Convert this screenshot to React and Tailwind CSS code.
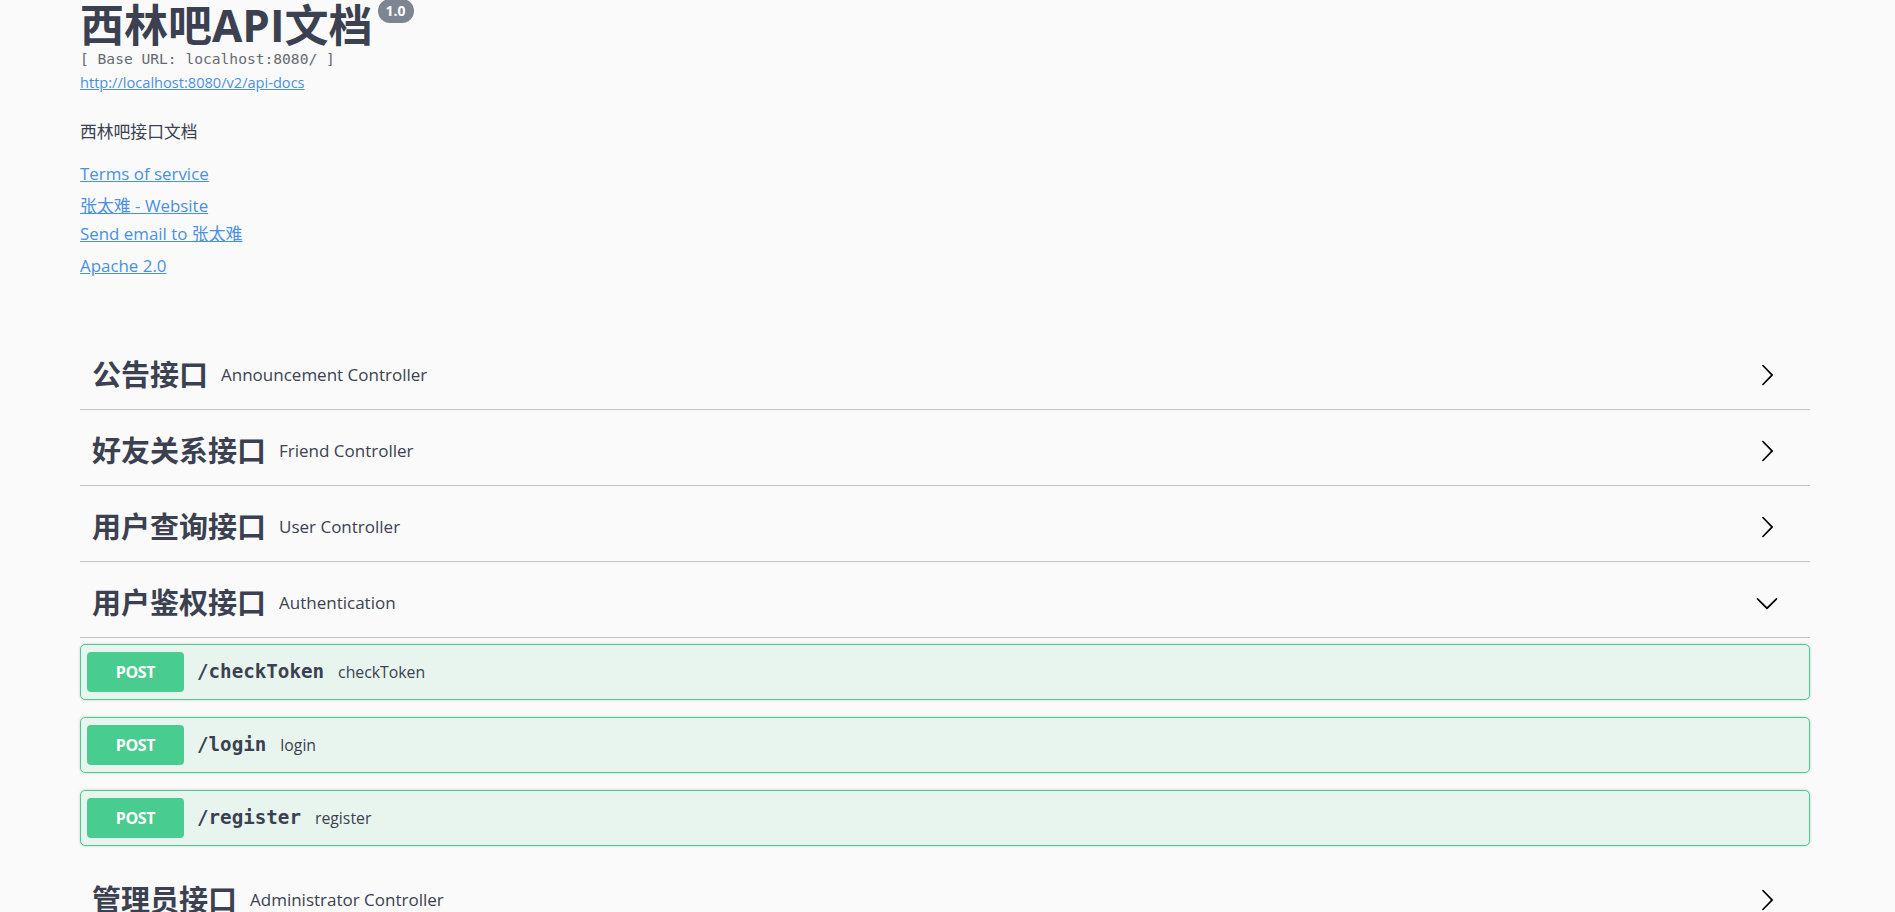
import React from "react";

const RightChevron = () => (
  <svg width="24" height="24" viewBox="0 0 20 20" className="shrink-0">
    <path
      d="M13.25 10L6.109 2.58a.697.697 0 010-.979.68.68 0 01.969 0l7.83 7.908a.697.697 0 010 .979l-7.83 7.908c-.268.271-.701.271-.969 0a.697.697 0 010-.979L13.25 10z"
      fill="#000"
    />
  </svg>
);

const DownChevron = () => (
  <svg width="24" height="24" viewBox="0 0 20 20" className="shrink-0">
    <path
      d="M17.418 6.109c.272-.268.709-.268.979 0s.271.701 0 .969l-7.908 7.83c-.268.268-.701.268-.969 0l-7.908-7.83c-.27-.268-.27-.701 0-.969.271-.268.709-.268.979 0L10 13.25l7.418-7.141z"
      fill="#000"
    />
  </svg>
);

const Tag = ({ name, desc, open }) => (
  <div className="mb-[6px] flex h-[70px] items-center border-b border-[#c1c3c7] pl-3 pr-[31px]">
    <span className="text-[29px] font-bold leading-[40px] text-[#3b4151]">{name}</span>
    <span className="flex-1 pl-[13px] pr-3 text-[17px] leading-[24px] text-[#3b4151]">{desc}</span>
    {open ? <DownChevron /> : <RightChevron />}
  </div>
);

const Op = ({ path, summary, last }) => (
  <div
    className={
      "flex items-center rounded-[5px] border border-[#49cc90] bg-[#e8f5ef] px-[6px] py-[7px] shadow-[0_0_3px_rgba(0,0,0,0.19)] " +
      (last ? "mb-[19px]" : "mb-[17px]")
    }
  >
    <span className="flex h-[40px] w-[97px] items-center justify-center rounded-[4px] bg-[#49cc90] text-[16px] font-bold tracking-[-0.3px] text-white">
      POST
    </span>
    <span className="pl-[13px] pr-[14px] font-['DejaVu_Sans_Mono',monospace] text-[19.2px] font-bold leading-[24px] text-[#3b4151]">
      {path}
    </span>
    <span className="text-[15.8px] leading-[24px] text-[#3b4151]">{summary}</span>
  </div>
);

export default function App() {
  return (
    <div className="h-[912px] overflow-hidden bg-[#fafafa] font-['Open_Sans','Noto_Sans_CJK_SC',sans-serif] text-[#3b4151]">
      <div className="ml-[80px] w-[1730px]">
        <div className="flex items-start">
          <h2 className="text-[44px] font-bold leading-[50px] text-[#3b4151]">西林吧API文档</h2>
          <span className="ml-[5px] -mt-[1px] rounded-full bg-[#7d8492] px-[8px] text-[14px] font-bold leading-[24px] text-white">
            1.0
          </span>
        </div>
        <div className="font-['DejaVu_Sans_Mono',monospace] text-[14.6px] leading-[18px] text-[#666a72]">
          [ Base URL: localhost:8080/ ]
        </div>
        <div className="mt-[4px] text-[14.6px] leading-[20px]">
          <a className="text-[#4990e2] underline">http://localhost:8080/v2/api-docs</a>
        </div>
        <div className="mt-[26px] text-[16.8px] leading-[28px] text-[#3b4151]">西林吧接口文档</div>
        <div className="mt-[14px] text-[16.9px] leading-[28px]">
          <a className="text-[#4990e2] underline">Terms of service</a>
        </div>
        <div className="mt-[4px] text-[16.9px] leading-[28px]">
          <div>
            <a className="text-[#4990e2] underline">张太难 - Website</a>
          </div>
          <div>
            <a className="text-[#4990e2] underline">Send email to 张太难</a>
          </div>
        </div>
        <div className="mt-[4px] text-[16.9px] leading-[28px]">
          <a className="text-[#4990e2] underline">Apache 2.0</a>
        </div>

        <div className="mt-[60px]">
          <Tag name="公告接口" desc="Announcement Controller" />
          <Tag name="好友关系接口" desc="Friend Controller" />
          <Tag name="用户查询接口" desc="User Controller" />
          <Tag name="用户鉴权接口" desc="Authentication" open />
          <Op path="/checkToken" summary="checkToken" />
          <Op path="/login" summary="login" />
          <Op path="/register" summary="register" last />
          <Tag name="管理员接口" desc="Administrator Controller" />
        </div>
      </div>
    </div>
  );
}
